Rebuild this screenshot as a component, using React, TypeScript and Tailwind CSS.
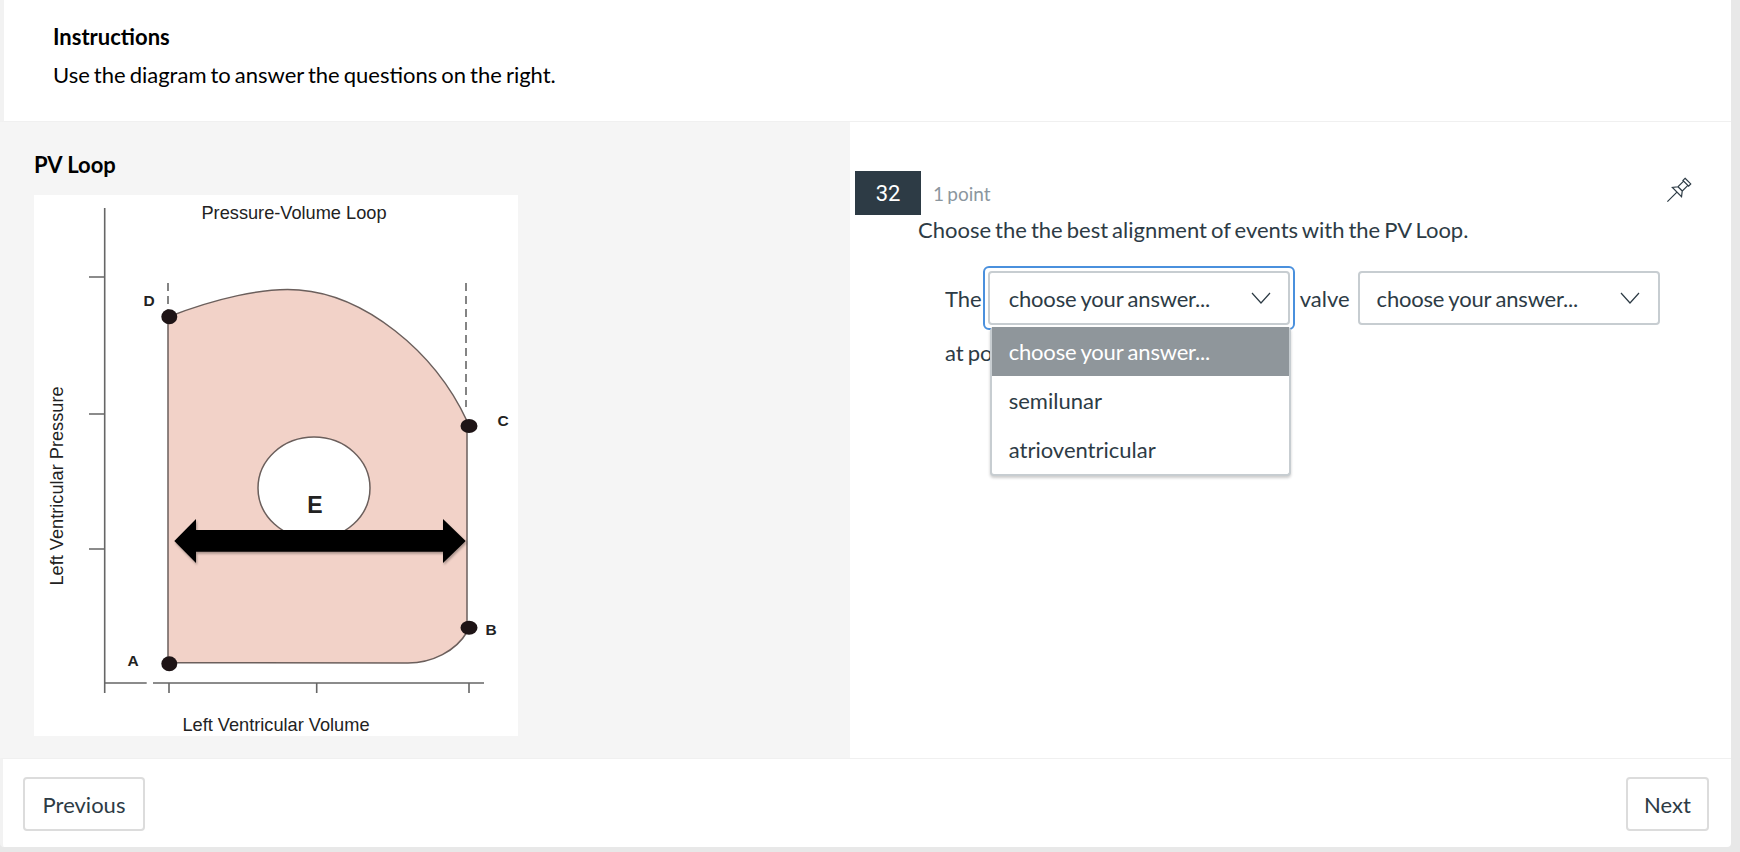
const options = ["choose your answer...", "semilunar", "atrioventricular"];

function Select({ open = false }: { open?: boolean }) {
  return (
    <div className={open ? "relative -ml-[7px] -mr-[5px] rounded-md border-2 border-[#4a90dd] p-[3px]" : "relative"}>
      <div className={open ? "flex h-[54px] w-[302px] items-center justify-between rounded border-2 border-[#c7cdd1] bg-white pl-[19px] pr-[17px]" : "flex h-[54px] w-[302px] items-center justify-between rounded border-2 border-[#c7cdd1] bg-white pl-[17px] pr-[18px]"}>
        <span className="tracking-[-0.2px] [word-spacing:-0.8px]">choose your answer...</span>
        <svg viewBox="0 0 20 12" className="h-[12px] w-[20px]" fill="none" stroke="#2d3b45" strokeWidth="1.2">
          <path d="M1 1L10 11L19 1" />
        </svg>
      </div>
      {open && (
        <ul className="absolute left-[5px] top-[59px] z-10 w-[301px] rounded-sm border-2 border-t-0 border-[#c7cdd1] bg-white shadow-[0_2px_3px_rgba(0,0,0,0.2)]">
          {options.map((o, i) => (
            <li key={o} className={i === 0 ? "flex h-[49px] items-center bg-[#8f969b] pl-[17px] tracking-[-0.2px] text-white [word-spacing:-0.8px]" : "flex h-[49px] items-center pl-[17px]"}>
              {o}
            </li>
          ))}
        </ul>
      )}
    </div>
  );
}

function PvLoop() {
  return (
    <svg viewBox="0 0 484 541" className="h-[541px] w-[484px] bg-white [word-spacing:0]" style={{ fontFamily: '"Liberation Sans", Arial, sans-serif' }}>
      <g stroke="#666" strokeWidth="1.6" fill="none">
        <path d="M70.7 13V498M55 82H70.7M55 219H70.7M55 354H70.7M70.7 488H112.7M119 488H450M135 488V498M282.7 488V498M435 488V498" />
      </g>
      <path d="M134 88V117M432 88V212" stroke="#666" strokeWidth="1.6" strokeDasharray="8 5" fill="none" />
      <path
        d="M134 122C180 104 230 92 265 95C330 100 400 155 433 226V437C422 456 398 468 374 468L134 467.7Z"
        fill="#f2d2c8"
        stroke="#6b5f5c"
        strokeWidth="1.5"
      />
      <ellipse cx="280" cy="293" rx="56" ry="51" fill="#fff" stroke="#6b5f5c" strokeWidth="1.5" />
      <path className="drop-shadow-[1px_2px_1px_rgba(0,0,0,0.3)]" d="M140.3 346L162 324V335H409V324L431.7 346L409 368V356.7H162V368Z" fill="#000" />
      <ellipse cx="135.3" cy="121.7" rx="8" ry="7.5" fill="#1e1416" />
      <ellipse cx="435" cy="231" rx="8.5" ry="7" fill="#1e1416" />
      <ellipse cx="435" cy="432.7" rx="8.5" ry="7" fill="#1e1416" />
      <ellipse cx="135.3" cy="468.7" rx="8" ry="7.5" fill="#1e1416" />
      <g fill="#222" fontSize="18.2" textAnchor="middle">
        <text x="260" y="24">Pressure-Volume Loop</text>
        <text x="242" y="536">Left Ventricular Volume</text>
        <text transform="translate(29 291) rotate(-90)">Left Ventricular Pressure</text>
      </g>
      <g fill="#222" fontSize="15.5" fontWeight="700" textAnchor="middle">
        <text x="115" y="111">D</text>
        <text x="469" y="231">C</text>
        <text x="457" y="440">B</text>
        <text x="99" y="471">A</text>
        <text x="281" y="318" fontSize="23">E</text>
      </g>
    </svg>
  );
}

export default function App() {
  return (
    <div className="flex h-[852px] flex-col bg-[#e8e8e8] pb-[5px] pr-[9px] text-[22px] text-[#2d3b45] [word-spacing:-1.6px]" style={{ fontFamily: "Lato, sans-serif" }}>
      <div className="h-[122px] border-b border-l-4 border-b-[#f0f0f0] border-l-[#f2f2f2] bg-white pl-[49px] pt-[22px] text-black">
        <h2 className="font-bold leading-[30px]">Instructions</h2>
        <p className="mt-2 leading-[30px]">Use the diagram to answer the questions on the right.</p>
      </div>

      <div className="flex h-[636px]">
        <div className="w-[850px] bg-[#f5f5f5] pl-[34px] pt-[28px]">
          <h3 className="mb-[15px] font-bold leading-[30px] text-black [word-spacing:0]">PV Loop</h3>
          <PvLoop />
        </div>
        <div className="flex-1 bg-white pl-[5px] pt-[49px]">
          <div className="flex h-[44px] items-center pr-[42px]">
            <div className="flex h-[44px] w-[66px] items-center justify-center bg-[#2d3b45] text-[22px] text-white" style={{ fontFamily: "Roboto, sans-serif" }}>32</div>
            <span className="ml-3 mt-[2px] text-[19px] text-[#8b969e]">1 point</span>
            <svg viewBox="0 0 22 22" className="mb-[4px] ml-auto h-[22px] w-[22px] overflow-visible" fill="none" stroke="#2d3b45" strokeWidth="1.2">
              <g transform="rotate(45 11 11)">
                <path d="M7 -3H15V0H7ZM8 0V8L4.5 12.5H17.5L14 8V0M8 8H14M11 12.5V26" />
              </g>
            </svg>
          </div>
          <p className="ml-[63px] leading-[30px]">Choose the the best alignment of events with the PV Loop.</p>
          <div className="ml-[90px] mt-[21px] flex w-[740px] flex-wrap items-center gap-x-[8px]">
            <span>The</span>
            <Select open />
            <span className="ml-[2px]">valve</span>
            <Select />
            <span className="mt-[8px] w-full leading-[30px]">at point</span>
          </div>
        </div>
      </div>

      <div className="flex flex-1 items-center justify-between rounded-b-sm border-l-[3px] border-t border-l-[#f2f2f2] border-t-[#f0f0f0] bg-white pl-5 pr-[22px] pt-[2px]">
        <button className="h-[54px] w-[122px] rounded border-2 border-[#dcdcdc] bg-white">Previous</button>
        <button className="h-[54px] w-[83px] rounded border-2 border-[#dcdcdc] bg-white">Next</button>
      </div>
    </div>
  );
}
